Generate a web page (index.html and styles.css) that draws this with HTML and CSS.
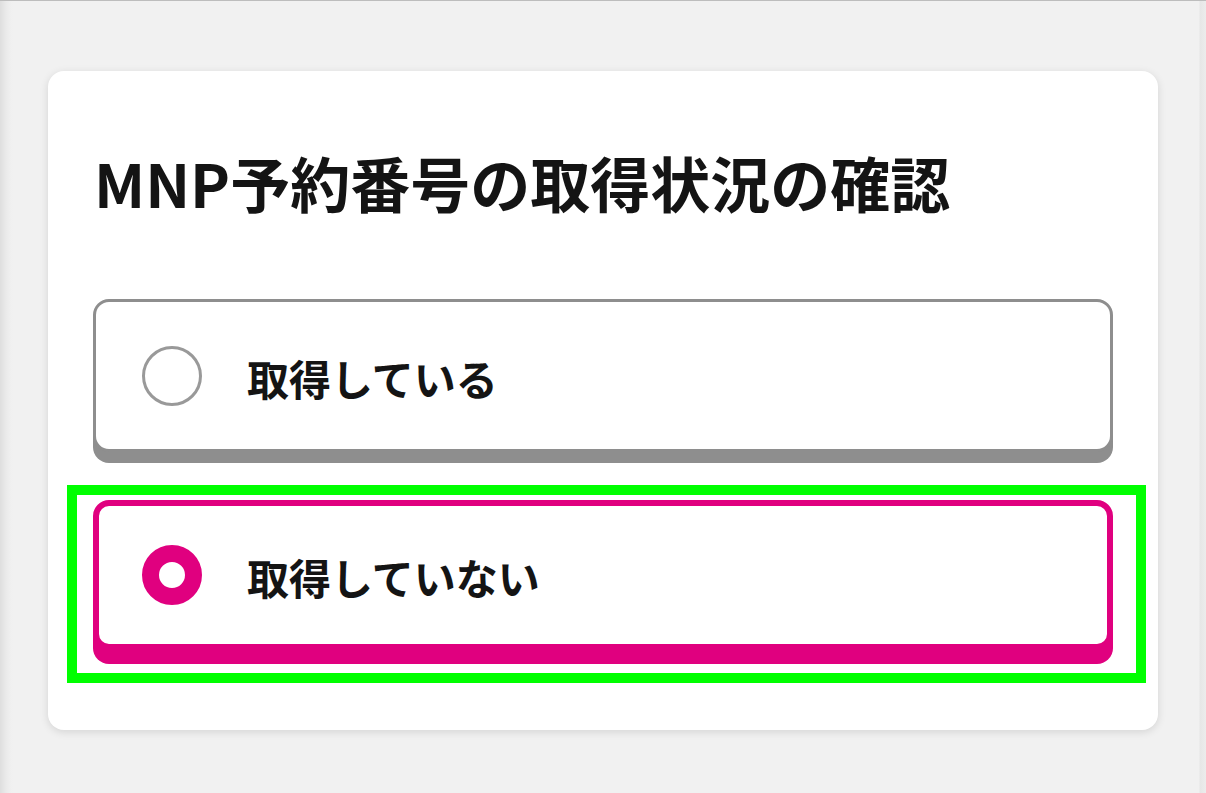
FILE: index.html
```html
<!DOCTYPE html>
<html lang="ja">
<head>
<meta charset="utf-8">
<title>MNP予約番号の取得状況の確認</title>
<link rel="stylesheet" href="styles.css">
</head>
<body>
<div class="page">
  <section class="card">
    <h1 class="title">MNP予約番号の取得状況の確認</h1>
    <div class="options">
      <label class="option">
        <span class="radio"></span>
        <span class="label">取得している</span>
      </label>
      <div class="focus-wrap">
        <label class="option option-selected">
          <span class="radio radio-checked"></span>
          <span class="label">取得していない</span>
        </label>
        <span class="focus-ring"></span>
      </div>
    </div>
  </section>
</div>
</body>
</html>
```
FILE: styles.css
```css
html, body {
  margin: 0;
  padding: 0;
}
body {
  width: 1206px;
  height: 793px;
  overflow: hidden;
  font-family: "Noto Sans CJK JP", "Noto Sans", sans-serif;
  color: #141414;
}
.page {
  box-sizing: border-box;
  height: 793px;
  border-top: 1px solid #bdbdbd;
  background: linear-gradient(to right, #dedede 0px, #eaeaea 6px, #f0f0f0 11px, #f1f1f1 13px, #f1f1f1 1199px, #e6e6e6 1200px, #ececec 1206px);
  padding: 70px 48px 0 48px;
}
.card {
  width: 1110px;
  box-sizing: border-box;
  background: #fff;
  border-radius: 16px;
  box-shadow: 0 2px 8px rgba(0, 0, 0, 0.12);
  padding: 66px 45px 80px 45px;
}
.title {
  margin: 0 0 72px 1px;
  font-size: 60px;
  line-height: 90px;
  font-weight: 700;
  color: #141414;
}
.options {
  display: flex;
  flex-direction: column;
  gap: 48px;
}
.option {
  box-sizing: border-box;
  height: 153px;
  display: flex;
  align-items: center;
  border: 3px solid #8e8e8e;
  border-radius: 16px;
  box-shadow: 0 11px 0 0 #8e8e8e;
  padding-left: 46px;
  background: #fff;
}
.option-selected {
  height: 150px;
  border: 6px solid #e0007f;
  box-shadow: 0 14px 0 0 #e0007f;
  padding-left: 43px;
}
.radio {
  box-sizing: border-box;
  width: 60px;
  height: 60px;
  border-radius: 50%;
  border: 3px solid #999;
  flex: none;
}
.radio-checked {
  border: 17.5px solid #e0007f;
}
.label {
  margin-left: 45px;
  font-size: 42px;
  font-weight: 700;
  line-height: 1;
  margin-top: 4px;
}
.focus-wrap {
  position: relative;
}
.focus-ring {
  position: absolute;
  left: -26px;
  top: -15px;
  width: 1079px;
  height: 198px;
  box-sizing: border-box;
  border: 10px solid #00ff00;
  pointer-events: none;
}
```
